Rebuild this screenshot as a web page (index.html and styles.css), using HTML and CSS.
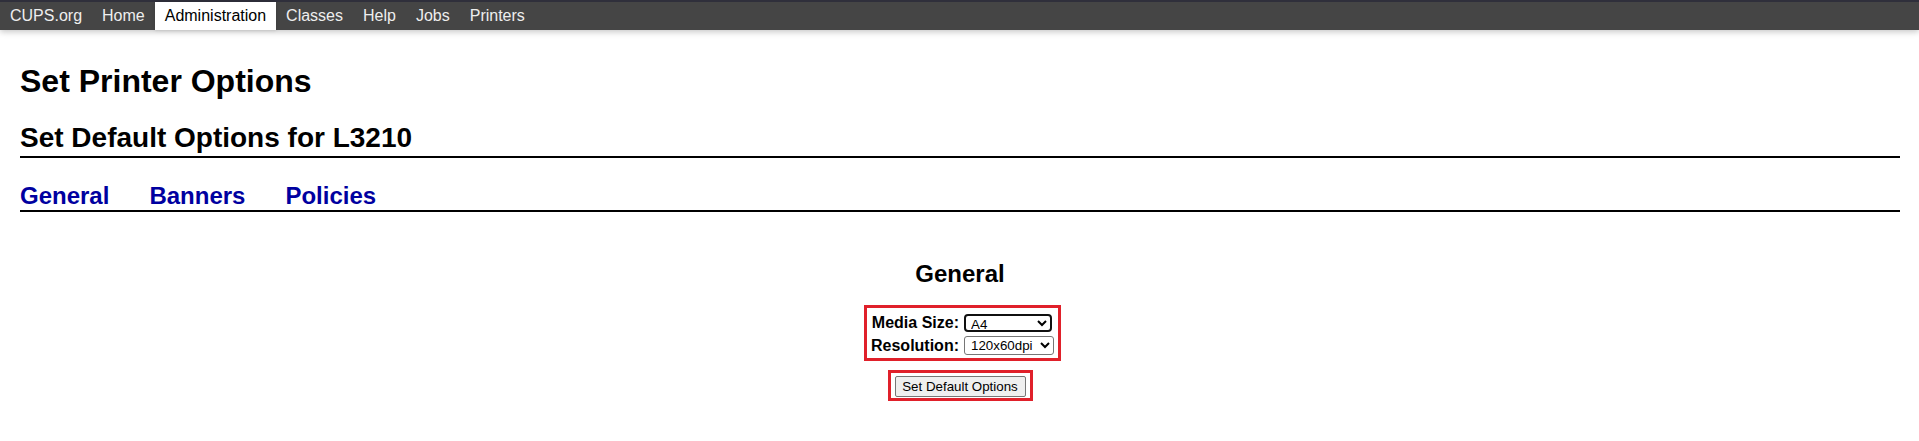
FILE: index.html
```html
<!DOCTYPE html>
<html lang="en">
<head>
<meta charset="utf-8">
<title>Set Printer Options - CUPS</title>
<link rel="stylesheet" href="styles.css">
</head>
<body>
<header class="header">
  <ul class="menu">
    <li class="menu-item"><a class="menu-link" href="#">CUPS.org</a></li>
    <li class="menu-item"><a class="menu-link" href="#">Home</a></li>
    <li class="menu-item active"><a class="menu-link" href="#">Administration</a></li>
    <li class="menu-item"><a class="menu-link" href="#">Classes</a></li>
    <li class="menu-item"><a class="menu-link" href="#">Help</a></li>
    <li class="menu-item"><a class="menu-link" href="#">Jobs</a></li>
    <li class="menu-item"><a class="menu-link" href="#">Printers</a></li>
  </ul>
</header>
<main class="content">
  <h1 class="title">Set Printer Options</h1>
  <h2 class="subtitle">Set Default Options for L3210</h2>
  <nav class="tabs">
    <a class="tab" href="#">General</a>
    <a class="tab" href="#">Banners</a>
    <a class="tab" href="#">Policies</a>
  </nav>
  <h3 class="section">General</h3>
  <form class="options">
    <div class="annot fields">
      <label class="field-label" for="media">Media Size:</label>
      <select class="field-select select-media" id="media">
        <option>A4</option>
      </select>
      <label class="field-label" for="res">Resolution:</label>
      <select class="field-select select-res" id="res">
        <option>120x60dpi</option>
      </select>
    </div>
    <div class="annot btnbox">
      <button class="submit" type="button">Set Default Options</button>
    </div>
  </form>
</main>
</body>
</html>
```
FILE: styles.css
```css
html, body {
  margin: 0;
  padding: 0;
  background: #fff;
}
body {
  font-family: "Liberation Sans", Arial, Helvetica, sans-serif;
  color: #000;
}
.header {
  background: #454545;
  border-top: 2px solid #2f2f3b;
  height: 28px;
  box-shadow: 0 2px 6px rgba(0, 0, 0, 0.22);
}
.menu {
  list-style: none;
  margin: 0;
  padding: 0;
  display: flex;
  height: 28px;
}
.menu-item {
  height: 28px;
}
.menu-link {
  display: block;
  padding: 0 10px;
  line-height: 28px;
  font-size: 16px;
  color: #eeeeee;
  text-decoration: none;
}
.menu-item.active {
  background: #fff;
  box-shadow: 0 0 4px rgba(0, 0, 0, 0.15);
}
.menu-item.active .menu-link {
  color: #000;
}
.content {
  padding: 0 19px 0 20px;
}
.title {
  margin: 33px 0 0;
  font-size: 32px;
  line-height: 36px;
  font-weight: bold;
}
.subtitle {
  margin: 23px 0 0;
  font-size: 28px;
  line-height: 32px;
  font-weight: bold;
  padding-bottom: 2px;
  border-bottom: 2px solid #000;
}
.tabs {
  margin-top: 24px;
  display: flex;
  gap: 40px;
  border-bottom: 2px solid #000;
}
.tab {
  font-size: 24px;
  line-height: 28px;
  font-weight: bold;
  color: #0000a0;
  text-decoration: none;
}
.section {
  margin: 48px 0 0;
  text-align: center;
  font-size: 24px;
  line-height: 28px;
  font-weight: bold;
}
.options {
  margin-top: 17px;
  display: flex;
  flex-direction: column;
  align-items: center;
}
.annot {
  border: 3px solid #e0202a;
}
.fields {
  margin-left: 5px;
  display: grid;
  grid-template-columns: auto auto;
  grid-auto-rows: 21px;
  column-gap: 5px;
  row-gap: 2px;
  align-items: center;
  padding: 4px 4px 2px 4px;
}
.field-label {
  text-align: right;
  font-size: 16px;
  font-weight: bold;
  line-height: 21px;
}
.field-select {
  font-family: "Liberation Sans", Arial, sans-serif;
  font-size: 13.33px;
  color: #000;
  background-color: #fff;
  border: 1px solid #767676;
  border-radius: 3px;
  padding: 0 0 0 2px;
  margin: 0;
}
.select-media {
  width: 88px;
  height: 18px;
  border: 2px solid #101010;
  border-radius: 4px;
  padding-left: 1px;
}
.select-res {
  width: 90px;
  height: 19px;
}
.btnbox {
  margin-top: 9px;
  padding: 3px 4px 1px;
  display: flex;
}
.submit {
  font-family: "Liberation Sans", Arial, sans-serif;
  font-size: 13.33px;
  color: #000;
  width: 131px;
  height: 21px;
  padding: 0 6px;
  background: #efefef;
  border: 1px solid #767676;
  border-radius: 2px;
}
```
